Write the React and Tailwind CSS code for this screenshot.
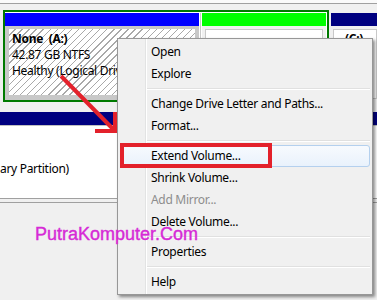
import React from 'react';

const menuItems = [
  { label: 'Open' },
  { label: 'Explore' },
  { sep: true },
  { label: 'Change Drive Letter and Paths...' },
  { label: 'Format...' },
  { sep: true },
  { label: 'Extend Volume...', active: true },
  { label: 'Shrink Volume...' },
  { label: 'Add Mirror...', disabled: true },
  { label: 'Delete Volume...' },
  { sep: true },
  { label: 'Properties' },
  { sep: true },
  { label: 'Help' },
];

const ContextMenu = () => (
  <div className="absolute left-[117px] top-[38px] w-[256px] border border-[#979797] bg-[#f0f0f0] pt-[2px] pb-px shadow-[2px_2px_3px_rgba(0,0,0,0.45)]">
    {/* icon gutter */}
    <div className="absolute left-[27px] top-0 bottom-0 w-px bg-[#e2e3e3]" />
    <div className="absolute left-[28px] top-0 bottom-0 w-px bg-white" />
    {menuItems.map((item, i) => {
      if (item.sep) {
        return (
          <div key={i} className="relative h-[8px] flex flex-col justify-center pl-[29px] pr-[2px]">
            <div className="h-px bg-[#e0e0e0]" />
            <div className="h-px bg-white" />
          </div>
        );
      }
      if (item.active) {
        return (
          <div
            key={i}
            className="relative mx-[2px] h-[22px] flex items-center pl-[30px] rounded-[3px] border border-[#b4d0ee] bg-linear-to-b from-[#f7fafe] to-[#e9f2fc] text-black"
          >
            {item.label}
          </div>
        );
      }
      return (
        <div
          key={i}
          className={`relative h-[22px] flex items-center pl-[33px] ${item.disabled ? 'text-[#8d8d8d]' : 'text-black'}`}
        >
          {item.label}
        </div>
      );
    })}
  </div>
);

export default function App() {
  return (
    <div className="relative w-[377px] h-[300px] overflow-hidden bg-[#f0f0f0] font-['Noto_Sans',sans-serif] text-[12px] tracking-[-0.3px] text-black">
      {/* top strip */}
      <div className="h-[3px] bg-[#fafafa]" />
      <div className="h-px bg-[#a0a0a0]" />
      <div className="h-[6px]" />

      {/* disk row 1 */}
      <div className="flex h-[92px]">
        <div className="w-[3px] shrink-0" />
        {/* extended partition frame */}
        <div className="flex w-[326px] shrink-0 border-2 border-[#007a00] bg-white pt-px pr-px">
          {/* None (A:) - selected */}
          <div className="flex w-[194px] flex-col">
            <div className="h-[13px] bg-[#0000ff]" />
            <div className="flex-1 bg-[#c8c8c8] pt-[3px] px-[4px] pb-[5px]">
              <div className="h-full pl-[3px] pt-[2px] leading-[16px] whitespace-nowrap bg-[repeating-linear-gradient(135deg,#ffffff_0px,#ffffff_4px,#a9a9a9_4px,#a9a9a9_5px)]">
                <div className="font-bold whitespace-pre">None  (A:)</div>
                <div>42.87 GB NTFS</div>
                <div>Healthy (Logical Drive)</div>
              </div>
            </div>
          </div>
          <div className="w-[3px] flex justify-center">
            <div className="w-px bg-[#c8c8c8]" />
          </div>
          {/* second logical drive */}
          <div className="flex flex-1 flex-col">
            <div className="h-[13px] bg-[#00ff00]" />
            <div className="flex-1 bg-[#f0f0f0] p-[3px]">
              <div className="h-full border border-[#c8c8c8] bg-white" />
            </div>
          </div>
        </div>
        <div className="w-[2px] shrink-0" />
        {/* (C:) */}
        <div className="flex flex-1 flex-col pt-[3px]">
          <div className="h-[13px] bg-[#000080]" />
          <div className="flex-1 bg-[#f0f0f0] pt-[3px] pl-[2px] pb-[3px]">
            <div className="h-full border border-[#c8c8c8] bg-white pl-[11px] pt-px leading-[16px] font-bold">
              (C:)
            </div>
          </div>
        </div>
      </div>

      {/* disk row 2 */}
      <div className="h-[10px]" />
      <div className="h-[13px] bg-[#000080]" />
      <div className="h-px bg-[#c0c0c0]" />
      <div className="h-[72px] bg-white pt-[35px] leading-[16px] whitespace-nowrap">
        ary Partition)
      </div>
      <div className="h-px bg-[#a0a0a0]" />
      <div className="h-[3px]" />
      <div className="h-px bg-[#a0a0a0]" />

      <ContextMenu />

      {/* red highlight around Extend Volume */}
      <div className="absolute left-[120px] top-[143px] w-[152px] h-[25px] border-4 border-[#e3212b]" />

      {/* red arrow */}
      <svg className="absolute left-0 top-0 pointer-events-none" width="377" height="300" viewBox="0 0 377 300">
        <line x1="61" y1="76" x2="113" y2="129" stroke="#e3212b" strokeWidth="4" />
        <polyline points="95,131 115,131 115,112" fill="none" stroke="#e3212b" strokeWidth="4" />
      </svg>

      {/* watermark */}
      <div className="absolute left-[35px] top-[225px] font-['Liberation_Sans',Arial,sans-serif] text-[18px] leading-[18px] tracking-normal text-[#d62ad6] [-webkit-text-stroke:0.4px_#d62ad6] whitespace-nowrap">
        PutraKomputer.Com
      </div>
    </div>
  );
}
